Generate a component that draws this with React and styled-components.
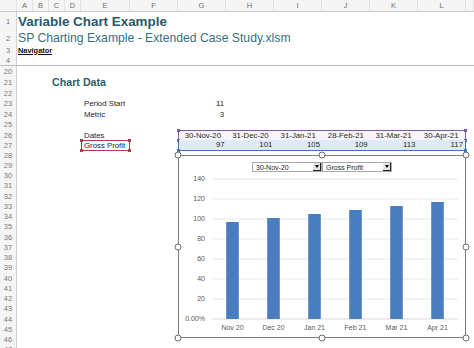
import React from 'react';
import styled, { createGlobalStyle } from 'styled-components';

const COLS = '17px 16px 16px 16px 16px 49px 48px repeat(6, 48px) 1fr';

const Global = createGlobalStyle`
  html, body { margin: 0; padding: 0; background: #fff; }
  body { font-family: "Liberation Sans", Arial, sans-serif; overflow: hidden; }
`;

const Sheet = styled.div`
  position: relative;
  width: 474px;
  height: 348px;
  overflow: hidden;
  background: #fff;
`;

const HeaderRow = styled.div`
  display: grid;
  grid-template-columns: ${COLS};
  height: 12px;
  box-sizing: border-box;
  background: #f5f5f5;
  border-bottom: 1px solid #c9c9c9;
`;

const HeaderCell = styled.div`
  display: flex;
  align-items: center;
  justify-content: center;
  font-size: 7.5px;
  color: #707070;
  border-right: 1px solid #e3e3e3;
`;

const Row = styled.div`
  display: grid;
  grid-template-columns: ${COLS};
  height: ${(p) => p.$h}px;
`;

const Divider = styled.div`
  height: 1px;
  background: #bdbdbd;
`;

const RowNum = styled.div`
  grid-column: 1;
  display: flex;
  align-items: center;
  justify-content: center;
  background: #f5f5f5;
  border-right: 1px solid #d2d2d2;
  font-size: 7.5px;
  color: #7a7a7a;
`;

const Cell = styled.div`
  grid-column: ${(p) => p.$col};
  display: flex;
  align-items: center;
  justify-content: ${(p) => (p.$align === 'right' ? 'flex-end' : p.$align === 'center' ? 'center' : 'flex-start')};
  padding: 0 ${(p) => (p.$pad ?? 3)}px;
  font-size: 7.8px;
  color: #262626;
  white-space: nowrap;
  min-width: 0;
`;

const Title = styled(Cell)`
  font-size: 13.4px;
  font-weight: bold;
  color: #28596a;
`;

const Subtitle = styled(Cell)`
  font-size: 12.2px;
  color: #36707e;
`;

const NavLink = styled(Cell)`
  font-size: 7.4px;
  font-weight: bold;
  color: #111;
  text-decoration: underline;
`;

const Section = styled(Cell)`
  font-size: 10.7px;
  font-weight: bold;
  color: #2d6171;
`;

const Range = styled.div`
  grid-column: ${(p) => p.$span};
  position: relative;
  display: grid;
  grid-template-columns: repeat(${(p) => p.$n}, 1fr);
  box-sizing: border-box;
  border: 1px solid ${(p) => p.$color};
  border-top-width: ${(p) => (p.$noTop ? 0 : 1)}px;
  border-bottom-width: ${(p) => p.$bottom ?? 1}px;
  background: ${(p) => p.$fill || 'transparent'};
`;

const Corner = styled.span`
  position: absolute;
  width: 3px;
  height: 3px;
  background: ${(p) => p.$color};
  ${(p) => (p.$v === 't' ? 'top: -2px;' : 'bottom: -2px;')}
  ${(p) => (p.$h === 'l' ? 'left: -2px;' : 'right: -2px;')}
`;

const RangeCell = styled.div`
  display: flex;
  align-items: center;
  justify-content: ${(p) => (p.$align === 'right' ? 'flex-end' : p.$align === 'center' ? 'center' : 'flex-start')};
  padding: 0 2px;
  font-size: 7.8px;
  color: #262626;
  white-space: nowrap;
`;

const Chart = styled.div`
  position: absolute;
  left: 178px;
  top: 155px;
  width: 288px;
  height: 183px;
  box-sizing: border-box;
  border: 1px solid #7d7d7d;
  background: #fff;
  display: flex;
  flex-direction: column;
  align-items: center;
`;

const Combos = styled.div`
  display: flex;
  margin-top: 6px;
  height: 10px;
`;

const Combo = styled.div`
  width: 70px;
  height: 10px;
  box-sizing: border-box;
  border: 1px solid #a8a8a8;
  background: #fff;
  display: flex;
  align-items: center;
  justify-content: space-between;
  padding-left: 3px;
  font-size: 7px;
  color: #222;
`;

const ComboArrow = styled.span`
  width: 8px;
  height: 8px;
  box-sizing: border-box;
  background: #e4e4e4;
  border-right: 1px solid #222;
  border-bottom: 1px solid #222;
  display: flex;
  align-items: center;
  justify-content: center;
  &::after {
    content: '';
    border-left: 2.5px solid transparent;
    border-right: 2.5px solid transparent;
    border-top: 3px solid #000;
  }
`;

const Plot = styled.svg`
  display: block;
  width: 286px;
  height: 165px;
  font-family: "Liberation Sans", Arial, sans-serif;
`;

const Handle = styled.span`
  position: absolute;
  width: 7px;
  height: 7px;
  box-sizing: border-box;
  border-radius: 50%;
  background: #fff;
  border: 1.3px solid #6b6b6b;
  transform: translate(-50%, -50%);
  left: calc(${(p) => p.$x}% + ${(p) => (p.$x / 100) * 2 - 1}px);
  top: calc(${(p) => p.$y}% + ${(p) => (p.$y / 100) * 2 - 1}px);
`;

const letters = ['A', 'B', 'C', 'D', 'E', 'F', 'G', 'H', 'I', 'J', 'K', 'L', ''];
const dates = ['30-Nov-20', '31-Dec-20', '31-Jan-21', '28-Feb-21', '31-Mar-21', '30-Apr-21'];
const values = [97, 101, 105, 109, 113, 117];
const months = ['Nov 20', 'Dec 20', 'Jan 21', 'Feb 21', 'Mar 21', 'Apr 21'];
const ticks = [140, 120, 100, 80, 60, 40, 20, 0];

const corners = (color, list = ['tl', 'tr', 'bl', 'br']) =>
  list.map((c) => <Corner key={c} $color={color} $v={c[0]} $h={c[1]} />);

function PlotArea() {
  const base = 147;
  return (
    <Plot viewBox="0 0 286 165">
      {ticks.map((t) => (
        <g key={t}>
          <line x1="33" x2="279" y1={base - t} y2={base - t} stroke={t === 0 ? '#d0d0d0' : '#e4e4e4'} strokeWidth="0.8" />
          <text x="26" y={base - t} textAnchor="end" dominantBaseline="middle" fontSize="7" fill="#595959">
            {t === 0 ? '0.00%' : t}
          </text>
        </g>
      ))}
      {values.map((v, i) => {
        const cx = 53.5 + 41 * i;
        return (
          <g key={i}>
            <rect x={cx - 6.3} y={base - v} width="12.6" height={v} fill="#4a7dbf" />
            <text x={cx} y="156" textAnchor="middle" dominantBaseline="middle" fontSize="7" fill="#595959">
              {months[i]}
            </text>
          </g>
        );
      })}
    </Plot>
  );
}

export default function App() {
  const plain = (n, h) => (
    <Row key={n} $h={h}>
      <RowNum>{n}</RowNum>
    </Row>
  );
  const rows = [];
  for (let n = 22; n <= 47; n++) {
    if (n === 23) {
      rows.push(
        <Row key={n} $h={10.25}>
          <RowNum>{n}</RowNum>
          <Cell $col="6 / 8">Period Start</Cell>
          <Cell $col="8" $align="right" $pad={2}>11</Cell>
        </Row>
      );
    } else if (n === 24) {
      rows.push(
        <Row key={n} $h={10.25}>
          <RowNum>{n}</RowNum>
          <Cell $col="6 / 8">Metric</Cell>
          <Cell $col="8" $align="right" $pad={2}>3</Cell>
        </Row>
      );
    } else if (n === 26) {
      rows.push(
        <Row key={n} $h={10.25}>
          <RowNum>{n}</RowNum>
          <Cell $col="6 / 8">Dates</Cell>
          <Range $span="8 / 14" $n={6} $color="#7b5ca8" $fill="#f7f5fb">
            {dates.map((d) => (
              <RangeCell key={d} $align="center">{d}</RangeCell>
            ))}
            {corners('#7b5ca8')}
          </Range>
        </Row>
      );
    } else if (n === 27) {
      rows.push(
        <Row key={n} $h={10.25}>
          <RowNum>{n}</RowNum>
          <Range $span="6 / 7" $n={1} $color="#a93c44">
            <RangeCell>Gross Profit</RangeCell>
            {corners('#a93c44')}
          </Range>
          <Range $span="8 / 14" $n={6} $color="#3d77b8" $fill="#deebf7" $noTop $bottom={1.5}>
            {values.map((v) => (
              <RangeCell key={v} $align="right">{v}</RangeCell>
            ))}
            {corners('#3d77b8', ['bl', 'br'])}
          </Range>
        </Row>
      );
    } else {
      rows.push(plain(n, 10.25));
    }
  }

  return (
    <>
      <Global />
      <Sheet>
        <HeaderRow>
          <HeaderCell />
          {letters.map((l, i) => (
            <HeaderCell key={i}>{l}</HeaderCell>
          ))}
        </HeaderRow>
        <Row $h={19}>
          <RowNum>1</RowNum>
          <Title $col="2 / -1" $pad={1}>Variable Chart Example</Title>
        </Row>
        <Row $h={14}>
          <RowNum>2</RowNum>
          <Subtitle $col="2 / -1" $pad={1}>SP Charting Example - Extended Case Study.xlsm</Subtitle>
        </Row>
        <Row $h={10}>
          <RowNum>3</RowNum>
          <NavLink $col="2 / -1" $pad={1}>Navigator</NavLink>
        </Row>
        {plain(4, 10)}
        <Divider />
        {plain(20, 10)}
        <Row $h={12.5}>
          <RowNum>21</RowNum>
          <Section $col="4 / -1">Chart Data</Section>
        </Row>
        {rows}

        <Chart>
          <Combos>
            <Combo>
              30-Nov-20
              <ComboArrow />
            </Combo>
            <Combo>
              Gross Profit
              <ComboArrow />
            </Combo>
          </Combos>
          <PlotArea />
          {[
            [0, 0], [50, 0], [100, 0],
            [0, 50], [100, 50],
            [0, 100], [50, 100], [100, 100],
          ].map(([x, y]) => (
            <Handle key={`${x}-${y}`} $x={x} $y={y} />
          ))}
        </Chart>
      </Sheet>
    </>
  );
}
